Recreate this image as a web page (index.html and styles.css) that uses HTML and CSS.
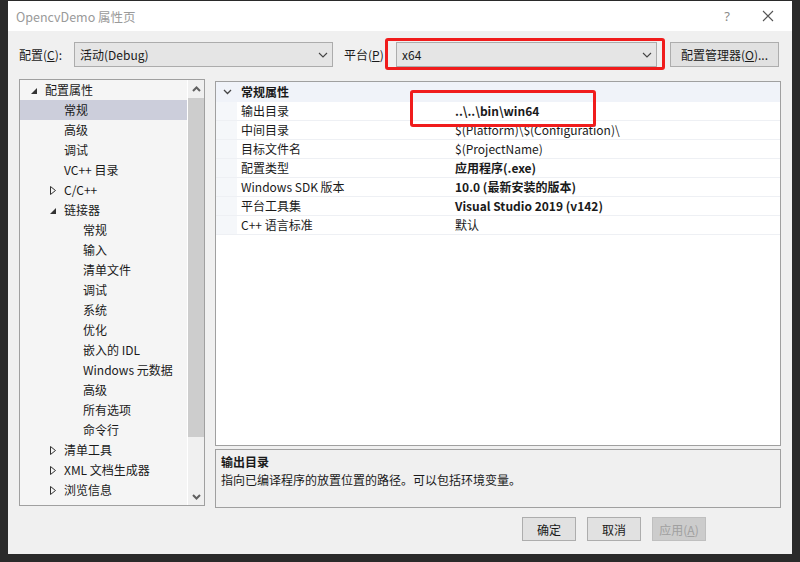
FILE: index.html
```html
<!DOCTYPE html>
<html>
<head>
<meta charset="utf-8">
<link rel="stylesheet" href="styles.css">
</head>
<body>
<div class="window">
  <div class="titlebar">
    <span class="title">OpencvDemo 属性页</span>
    <span class="tb-btns"><span class="help">?</span>
      <svg class="close" width="12" height="12" viewBox="0 0 12 12"><path d="M1 1L11 11M11 1L1 11" stroke="#555" stroke-width="1.1" fill="none"/></svg>
    </span>
  </div>

  <div class="toolbar">
    <span class="lbl cfg-lbl">配置(<u>C</u>):</span>
    <div class="combo cfg-combo"><span>活动(Debug)</span>
      <svg width="10" height="6" viewBox="0 0 10 6"><path d="M1 1L5 5L9 1" stroke="#444" stroke-width="1.1" fill="none"/></svg>
    </div>
    <span class="lbl plat-lbl">平台(<u>P</u>)</span>
    <div class="combo plat-combo"><span>x64</span>
      <svg width="10" height="6" viewBox="0 0 10 6"><path d="M1 1L5 5L9 1" stroke="#444" stroke-width="1.1" fill="none"/></svg>
    </div>
    <button class="btn mgr">配置管理器(<u>O</u>)...</button>
  </div>

  <div class="main">
    <div class="tree">
      <div class="tree-list">
        <div class="row l0"><svg class="tri" width="6" height="6" viewBox="0 0 6 6"><path d="M6 0V6H0Z" fill="#333"/></svg>配置属性</div>
        <div class="row l1 sel">常规</div>
        <div class="row l1">高级</div>
        <div class="row l1">调试</div>
        <div class="row l1">VC++ 目录</div>
        <div class="row l1"><svg class="tri-c" width="6" height="9" viewBox="0 0 6 9"><path d="M0.5 0.5V8.5L5.5 4.5Z" fill="none" stroke="#333"/></svg>C/C++</div>
        <div class="row l1"><svg class="tri" width="6" height="6" viewBox="0 0 6 6"><path d="M6 0V6H0Z" fill="#333"/></svg>链接器</div>
        <div class="row l2">常规</div>
        <div class="row l2">输入</div>
        <div class="row l2">清单文件</div>
        <div class="row l2">调试</div>
        <div class="row l2">系统</div>
        <div class="row l2">优化</div>
        <div class="row l2">嵌入的 IDL</div>
        <div class="row l2">Windows 元数据</div>
        <div class="row l2">高级</div>
        <div class="row l2">所有选项</div>
        <div class="row l2">命令行</div>
        <div class="row l1"><svg class="tri-c" width="6" height="9" viewBox="0 0 6 9"><path d="M0.5 0.5V8.5L5.5 4.5Z" fill="none" stroke="#333"/></svg>清单工具</div>
        <div class="row l1"><svg class="tri-c" width="6" height="9" viewBox="0 0 6 9"><path d="M0.5 0.5V8.5L5.5 4.5Z" fill="none" stroke="#333"/></svg>XML 文档生成器</div>
        <div class="row l1"><svg class="tri-c" width="6" height="9" viewBox="0 0 6 9"><path d="M0.5 0.5V8.5L5.5 4.5Z" fill="none" stroke="#333"/></svg>浏览信息</div>
      </div>
      <div class="scrollbar">
        <div class="sb-arrow"><svg width="9" height="6" viewBox="0 0 9 6"><path d="M1 5L4.5 1.5L8 5" stroke="#606060" stroke-width="2" fill="none"/></svg></div>
        <div class="sb-track"><div class="sb-thumb"></div></div>
        <div class="sb-arrow"><svg width="9" height="6" viewBox="0 0 9 6"><path d="M1 1L4.5 4.5L8 1" stroke="#606060" stroke-width="2" fill="none"/></svg></div>
      </div>
    </div>

    <div class="right">
      <div class="props">
        <div class="prow head">
          <div class="gut"><svg width="9" height="6" viewBox="0 0 9 6"><path d="M1 1L4.5 4.5L8 1" stroke="#444" stroke-width="1.3" fill="none"/></svg></div>
          <div class="pname">常规属性</div>
        </div>
        <div class="prow"><div class="gut"></div><div class="pname">输出目录</div><div class="pval b">..\..\bin\win64</div></div>
        <div class="prow"><div class="gut"></div><div class="pname">中间目录</div><div class="pval">$(Platform)\$(Configuration)\</div></div>
        <div class="prow"><div class="gut"></div><div class="pname">目标文件名</div><div class="pval">$(ProjectName)</div></div>
        <div class="prow"><div class="gut"></div><div class="pname">配置类型</div><div class="pval b">应用程序(.exe)</div></div>
        <div class="prow"><div class="gut"></div><div class="pname">Windows SDK 版本</div><div class="pval b">10.0 (最新安装的版本)</div></div>
        <div class="prow"><div class="gut"></div><div class="pname">平台工具集</div><div class="pval b">Visual Studio 2019 (v142)</div></div>
        <div class="prow"><div class="gut"></div><div class="pname">C++ 语言标准</div><div class="pval">默认</div></div>
      </div>
      <div class="desc">
        <div class="desc-title">输出目录</div>
        <div class="desc-text">指向已编译程序的放置位置的路径。可以包括环境变量。</div>
      </div>
    </div>
  </div>

  <div class="footer">
    <button class="btn fbtn">确定</button>
    <button class="btn fbtn">取消</button>
    <button class="btn fbtn dis">应用(<u>A</u>)</button>
  </div>
</div>
<div class="mark mark1"></div>
<div class="mark mark2"></div>
</body>
</html>
```

FILE: styles.css
```css
* { box-sizing: border-box; }
html, body { margin: 0; padding: 0; }
body {
  width: 800px;
  height: 562px;
  background: #2a2a2a;
  font-family: "Noto Sans CJK SC", "Noto Sans", sans-serif;
  font-size: 12px;
  color: #1a1a1a;
  overflow: hidden;
  position: relative;
  padding-top: 1px;
}
.window {
  margin-left: 8px;
  width: 784px;
  height: 553px;
  background: #f0f0f0;
  display: flex;
  flex-direction: column;
}
.titlebar {
  height: 30px;
  background: #fff;
  display: flex;
  align-items: center;
  justify-content: space-between;
  padding: 0 18px 0 8px;
  flex-shrink: 0;
}
.title { color: #9a9a9a; font-size: 12.5px; }
.tb-btns { display: flex; align-items: center; gap: 32px; }
.help { color: #8a8a8a; font-size: 13px; font-family: "Noto Sans", sans-serif; }
.close { display: block; }

.toolbar {
  display: flex;
  align-items: center;
  height: 25px;
  margin-top: 11px;
  padding-left: 11px;
  flex-shrink: 0;
}
.lbl { white-space: nowrap; }
.cfg-lbl { width: 55px; }
.plat-lbl { margin-left: 11px; width: 52px; }
.combo {
  height: 25px;
  background: #e5e5e5;
  border: 1px solid #acacac;
  display: flex;
  align-items: center;
  justify-content: space-between;
  padding: 0 4px 0 5px;
}
.cfg-combo { width: 259px; }
.plat-combo { width: 261px; }
.btn {
  font-family: inherit;
  font-size: 12px;
  color: #1a1a1a;
  background: #e1e1e1;
  border: 1px solid #adadad;
  padding: 0;
  margin: 0;
}
.mgr { margin-left: 13px; width: 109px; height: 25px; }

.main {
  display: flex;
  margin-top: 12px;
  padding-left: 11px;
  flex-shrink: 0;
}
.tree {
  width: 186px;
  height: 427px;
  border: 1px solid #a0a0a0;
  background: #f5f5f5;
  display: flex;
}
.tree-list { flex: 1; }
.row {
  height: 20px;
  line-height: 20px;
  position: relative;
  white-space: nowrap;
}
.row.l0 { padding-left: 25px; }
.row.l1 { padding-left: 44px; }
.row.l2 { padding-left: 63px; }
.row.sel { background: #cccedb; }
.tri { position: absolute; left: 11px; top: 8px; }
.l1 .tri { left: 30px; }
.tri-c { position: absolute; left: 30px; top: 6px; }
.scrollbar {
  width: 17px;
  border-left: 1px solid #fff;
  background: #f0f0f0;
  display: flex;
  flex-direction: column;
}
.sb-arrow {
  height: 17px;
  display: flex;
  align-items: center;
  justify-content: center;
}
.sb-track { flex: 1; }
.sb-thumb { height: 339px; background: #cdcdcd; margin-top: 1px; }

.right {
  margin-left: 10px;
  margin-top: 2px;
  width: 566px;
  display: flex;
  flex-direction: column;
}
.props {
  height: 365px;
  border: 1px solid #a0a0a0;
  background: #fff;
}
.prow {
  display: flex;
  height: 19px;
  line-height: 18px;
  border-bottom: 1px solid #eef0f4;
}
.prow.head { height: 20px; line-height: 19px; background: #f0f3f9; border-bottom: none; }
.gut {
  width: 21px;
  background: #f5f7fa;
  display: flex;
  align-items: center;
  justify-content: center;
  flex-shrink: 0;
}
.head .gut { background: transparent; padding-left: 1px; }
.pname { width: 218px; padding-left: 4px; white-space: nowrap; }
.head .pname { font-weight: bold; }
.pval { padding-left: 0; white-space: nowrap; }
.pval.b { font-weight: bold; }
.desc {
  margin-top: 3px;
  height: 59px;
  border: 1px solid #a0a0a0;
  background: #f0f0f0;
  padding: 3px 0 0 5px;
}
.desc-title { font-weight: bold; line-height: 18px; }
.desc-text { line-height: 18px; }

.footer {
  display: flex;
  justify-content: flex-end;
  gap: 11px;
  margin-top: 9px;
  padding-right: 86px;
}
.fbtn { width: 54px; height: 24px; }
.fbtn.dis { background: #cccccc; border-color: #bfbfbf; color: #a0a0a0; }

.mark {
  position: absolute;
  border: 3px solid #f01c1c;
  border-radius: 3px;
}
.mark1 { left: 385px; top: 38px; width: 280px; height: 32px; }
.mark2 { left: 410px; top: 90px; width: 186px; height: 37px; }
```
